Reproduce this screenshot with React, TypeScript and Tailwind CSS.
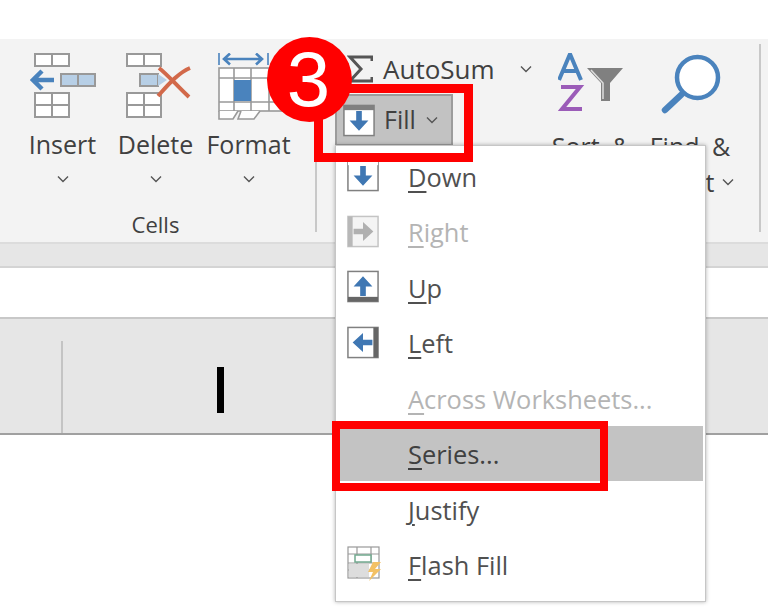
const font = "font-['Open_Sans','Noto_Sans',sans-serif]";

function Chevron({ className = "" }: { className?: string }) {
  return (
    <svg width="12" height="8" viewBox="0 0 12 8" className={className}>
      <path d="M1 1.5 L6 6.5 L11 1.5" fill="none" stroke="#555" strokeWidth="1.4" />
    </svg>
  );
}

function InsertIcon() {
  return (
    <svg width="66" height="66" viewBox="0 0 66 66">
      <g fill="#fff" stroke="#999" strokeWidth="2">
        <rect x="5" y="1" width="34" height="12" />
        <path d="M22 1 V13" />
        <rect x="5" y="40" width="34" height="24" />
        <path d="M22 40 V64 M5 52 H39" />
      </g>
      <rect x="31" y="21" width="34" height="12" fill="#b7cfe6" stroke="#999" strokeWidth="2" />
      <path d="M48 21 V33" stroke="#999" strokeWidth="2" />
      <path d="M24 27 H4 M12 18 L3 27 L12 36" fill="none" stroke="#4a83bd" strokeWidth="4.5" />
    </svg>
  );
}

function DeleteIcon() {
  return (
    <svg width="66" height="66" viewBox="0 0 66 66" className="ml-[7px]">
      <g fill="#fff" stroke="#999" strokeWidth="2">
        <rect x="1" y="1" width="34" height="12" />
        <path d="M18 1 V13" />
        <rect x="1" y="40" width="34" height="24" />
        <path d="M18 40 V64 M1 52 H35" />
      </g>
      <path d="M14 21 H32 V33 H14 Z" fill="#b7cfe6" stroke="#999" strokeWidth="2" />
      <path d="M32 21 L41 27 L32 33 Z" fill="#b7cfe6" />
      <path d="M33 15 C42 22 52 34 63 44 M64 15 C52 20 42 32 32 43" fill="none" stroke="#d2694a" strokeWidth="4" />
    </svg>
  );
}

function FormatIcon() {
  return (
    <svg width="68" height="68" viewBox="0 0 68 68" className="ml-[6px]">
      <path d="M1 0 V12 M50 0 V12" stroke="#4a83bd" strokeWidth="1.6" />
      <path d="M6 6 H44 M12 0.5 L6 6 L12 11.5 M38 0.5 L44 6 L38 11.5" fill="none" stroke="#4a83bd" strokeWidth="2.6" />
      <g fill="#fff" stroke="#999" strokeWidth="1.6">
        <rect x="1" y="15" width="66" height="43" />
        <path d="M16 15 V58 M33 15 V58 M51 15 V58 M1 25 H67 M1 49 H67" />
        <path d="M1 58 V66 H15 L20 58 M23 58 L20 66 H36 L42 58" />
      </g>
      <rect x="16" y="27" width="17" height="21" fill="#4a83bd" />
    </svg>
  );
}

function SigmaIcon() {
  return (
    <svg width="26" height="28" viewBox="0 0 26 28">
      <path d="M25 6 V2 H3 L14 14 L3 26 H25 V22" fill="none" stroke="#555" strokeWidth="3" />
    </svg>
  );
}

function SortIcon() {
  return (
    <svg width="66" height="60" viewBox="0 0 66 60">
      <path d="M1 27 L12 1 L23 27 M5 18 H19" fill="none" stroke="#4a83bd" strokeWidth="4" />
      <path d="M3 34 H22 L4 56 H24" fill="none" stroke="#9b5cb8" strokeWidth="4" />
      <path d="M29 15 H65 L52 30 V48 H43 V30 Z" fill="#808080" />
      <path d="M33 17 L45 30 V46" fill="none" stroke="#ddd" strokeWidth="1.5" />
    </svg>
  );
}

function FindIcon() {
  return (
    <svg width="64" height="62" viewBox="0 0 64 62">
      <circle cx="39.5" cy="25.5" r="20.5" fill="#fff" stroke="#4a83bd" strokeWidth="4.5" />
      <path d="M23 43 L7 58" stroke="#4a83bd" strokeWidth="6.5" strokeLinecap="round" />
    </svg>
  );
}

function FillArrowIcon({ dir, bar, muted }: { dir: "down" | "right" | "up" | "left"; bar: string; muted?: boolean }) {
  const rotate = { down: 0, right: -90, up: 180, left: 90 }[dir];
  const colour = muted ? "#b0b0b0" : "#3f77b3";
  return (
    <svg width="32" height="33" viewBox="0 0 34 34">
      <rect x="1" y="1" width="32" height="32" fill={muted ? "#f4f4f4" : "#fff"} stroke={muted ? "#c4c4c4" : "#808080"} strokeWidth="1.6" />
      {dir === "down" && <rect x="1" y="1" width="32" height="5" fill={bar} />}
      {dir === "up" && <rect x="1" y="28" width="32" height="5" fill={bar} />}
      {dir === "right" && <rect x="1" y="1" width="5" height="32" fill={bar} />}
      {dir === "left" && <rect x="28" y="1" width="5" height="32" fill={bar} />}
      <g transform={`rotate(${rotate} 17 17)`}>
        <path d="M14 7 H20 V17 H27 L17 28 L7 17 H14 Z" fill={colour} />
      </g>
    </svg>
  );
}

function FlashFillIcon() {
  return (
    <svg width="36" height="36" viewBox="0 0 36 36">
      <g fill="none" stroke="#999" strokeWidth="1.2">
        <rect x="1" y="1" width="31" height="31" />
        <path d="M1 8 H32 M1 17 H32 M1 24 H32 M10 1 V32 M24 1 V17" />
      </g>
      <rect x="8" y="9" width="16" height="7" fill="#fff" stroke="#72a98f" strokeWidth="1.5" />
      <rect x="2" y="18" width="20" height="13" fill="#ddd" />
      <path d="M34 16 H26 L21 26 H26 L22 35 L34 23 H28 Z" fill="#f3c165" />
    </svg>
  );
}

function RibbonButton({ icon, label }: { icon: React.ReactNode; label: string }) {
  return (
    <div className="flex w-[93px] flex-col items-center">
      <div className="flex h-[66px] items-start">{icon}</div>
      <span className="mt-[6px] text-[25px] leading-[38px] text-[#404040]">{label}</span>
      <Chevron className="mt-[12px]" />
    </div>
  );
}

function MenuItem({ icon, hotkey, rest, muted, active }: { icon?: React.ReactNode; hotkey: string; rest: string; muted?: boolean; active?: boolean }) {
  return (
    <div className={`flex h-[55.5px] items-center ${active ? "bg-[#c3c3c3]" : ""}`}>
      <div className="flex w-[68px] justify-start pl-[7px]">{icon}</div>
      <span className={`pt-[2px] text-[25.4px] ${muted ? "text-[#b4b4b4]" : active ? "text-[#404040]" : "text-[#505050]"}`}>
        <span className="underline underline-offset-[4px] decoration-[1.5px]">{hotkey}</span>
        {rest}
      </span>
    </div>
  );
}

export default function App() {
  return (
    <div className={`relative h-[607px] w-[768px] overflow-hidden bg-white ${font}`}>
      <div className="h-[39px]" />

      {/* ribbon */}
      <div className="flex h-[205px] border-b-2 border-[#dcdcdc] bg-[#f3f3f3]">
        <div className="flex w-[315px] flex-col">
          <div className="flex h-[171px] pl-[16px] pt-[14px]">
            <RibbonButton icon={<InsertIcon />} label="Insert" />
            <RibbonButton icon={<DeleteIcon />} label="Delete" />
            <RibbonButton icon={<FormatIcon />} label="Format" />
          </div>
          <div className="pl-[16px] pr-[20px] text-center text-[22px] leading-[28px] text-[#404040]">Cells</div>
        </div>
        <div className="mt-[11px] h-[182px] w-[2px] bg-[#c8c8c8]" />
        <div className="flex w-[221px] flex-col pl-[18px] pt-[13px]">
          <div className="ml-[12px] flex h-[34px] items-center">
            <SigmaIcon />
            <span className="ml-[10px] text-[26px] text-[#404040]">AutoSum</span>
            <Chevron className="ml-[25px]" />
          </div>
          <div className="mt-[8px] flex h-[52px] w-[118px] items-center border-2 border-[#9c9c9c] bg-[#c2c2c2] pl-[6px]">
            <FillArrowIcon dir="down" bar="#808080" />
            <span className="ml-[9px] text-[25px] text-[#404040]">Fill</span>
            <Chevron className="ml-[10px]" />
          </div>
        </div>
        <div className="flex w-[106px] flex-col items-center pt-[14px]">
          <SortIcon />
          <span className="mt-[14px] text-[25px] leading-[38px] text-[#404040] [word-spacing:6px]">Sort &amp;</span>
          <span className="text-[25px] leading-[38px] text-[#404040]">Filter</span>
        </div>
        <div className="flex w-[92px] flex-col items-center pt-[13px]">
          <FindIcon />
          <span className="mt-[13px] text-[25px] leading-[38px] text-[#404040] [word-spacing:6px]">Find &amp;</span>
          <span className="-mt-[2px] flex items-center text-[25px] leading-[38px] text-[#404040]">
            Select
            <Chevron className="ml-[8px]" />
          </span>
        </div>
        <div className="ml-[23px] mt-[5px] h-[188px] w-[2px] bg-[#c8c8c8]" />
      </div>

      {/* grey strip under the ribbon */}
      <div className="h-[24px] border-b-2 border-[#d4d4d4] bg-[#e6e6e6]" />
      <div className="h-[49px] bg-white" />

      {/* column header band */}
      <div className="flex h-[118px] border-y-2 border-t-[#c8c8c8] border-b-[#a0a0a0] bg-[#e6e6e6]">
        <div className="mt-[22px] w-[63px] border-r-2 border-[#c4c4c4]" />
        <div className="ml-[154px] mt-[48px] h-[46px] w-[7px] bg-black" />
      </div>

      {/* Fill dropdown */}
      <div className="absolute left-[335px] top-[145px] w-[371px] border border-[#c6c6c6] bg-white pl-[4px] pr-[2px] pt-[2px] pb-[9px] shadow-[0_0_4px_rgba(0,0,0,0.3)]">
        <MenuItem hotkey="D" rest="own" icon={<FillArrowIcon dir="down" bar="#fff" />} />
        <MenuItem hotkey="R" rest="ight" muted icon={<FillArrowIcon dir="right" bar="#b8b8b8" muted />} />
        <MenuItem hotkey="U" rest="p" icon={<FillArrowIcon dir="up" bar="#666" />} />
        <MenuItem hotkey="L" rest="eft" icon={<FillArrowIcon dir="left" bar="#666" />} />
        <MenuItem hotkey="A" rest="cross Worksheets..." muted />
        <MenuItem hotkey="S" rest="eries..." active />
        <MenuItem hotkey="J" rest="ustify" />
        <MenuItem hotkey="F" rest="lash Fill" icon={<FlashFillIcon />} />
      </div>

      {/* callouts */}
      <div className="absolute left-[314px] top-[84px] h-[78px] w-[159px] border-[9px] border-[#ff0000]" />
      <div className="absolute left-[332px] top-[421px] h-[70px] w-[276px] border-[8px] border-[#ff0000]" />
      <div className="absolute left-[267px] top-[37px] flex h-[85px] w-[85px] items-center justify-center rounded-full bg-[#ff0000] pb-[1px] pr-[2px] font-['Liberation_Sans',sans-serif] text-[78px] font-normal text-white">
        3
      </div>
    </div>
  );
}
